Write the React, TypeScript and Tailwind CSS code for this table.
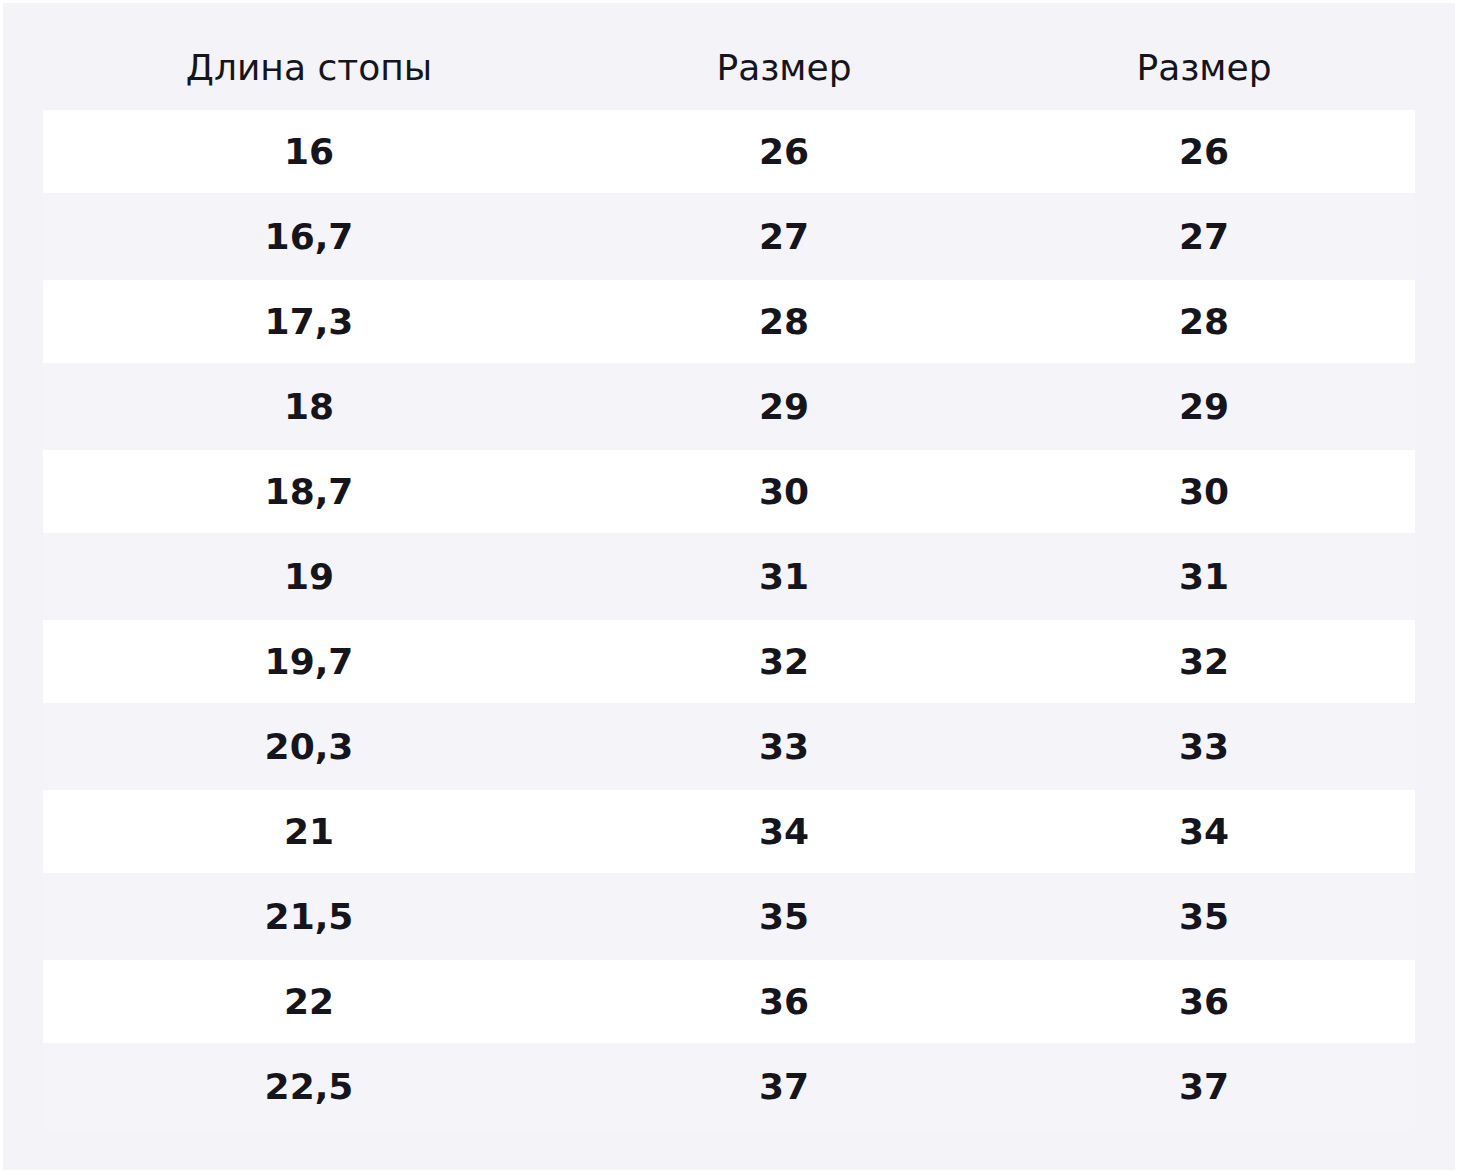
import React from "react";

const rows: [string, string, string][] = [
  ["16", "26", "26"],
  ["16,7", "27", "27"],
  ["17,3", "28", "28"],
  ["18", "29", "29"],
  ["18,7", "30", "30"],
  ["19", "31", "31"],
  ["19,7", "32", "32"],
  ["20,3", "33", "33"],
  ["21", "34", "34"],
  ["21,5", "35", "35"],
  ["22", "36", "36"],
  ["22,5", "37", "37"],
];

export default function App() {
  return (
    <div className="w-[1458px] h-[1173px] bg-white p-[3px] font-['DejaVu_Sans',sans-serif] text-[#16151c]">
      <div className="w-[1452px] h-[1167px] bg-[#f3f3f8] px-10 pt-10">
        <div className="grid grid-cols-[532px_418px_1fr] h-[67px] text-[36px] leading-none">
          <div className="flex justify-center pt-[7px]">Длина стопы</div>
          <div className="flex justify-center pt-[7px]">Размер</div>
          <div className="flex justify-center pt-[7px]">Размер</div>
        </div>
        {rows.map((r, i) => (
          <div
            key={r[0]}
            className={
              i % 2 === 0
                ? "grid grid-cols-[532px_418px_1fr] items-center h-[83px] bg-white text-[36px] font-bold"
                : "grid grid-cols-[532px_418px_1fr] items-center h-[87px] bg-[#f4f4f9] text-[36px] font-bold"
            }
          >
            <div className="text-center">{r[0]}</div>
            <div className="text-center">{r[1]}</div>
            <div className="text-center">{r[2]}</div>
          </div>
        ))}
      </div>
    </div>
  );
}
